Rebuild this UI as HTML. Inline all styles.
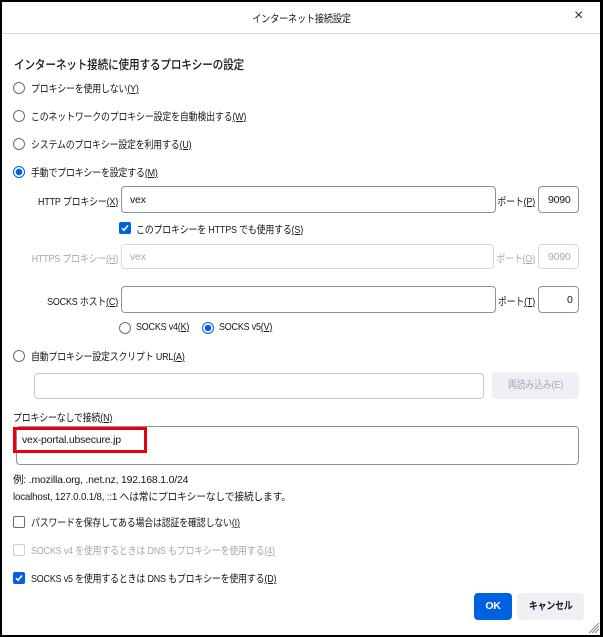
<!DOCTYPE html>
<html><head><meta charset="utf-8"><style>
*{box-sizing:border-box;margin:0;padding:0}
body{width:603px;height:637px;background:#fff;font-family:"Liberation Sans","Noto Sans CJK JP",sans-serif;font-size:10.5px;letter-spacing:-0.2px;color:#15141a;position:relative;overflow:hidden}
.frame{position:absolute;left:0;top:0;width:603px;height:637px;border:2px solid #000;border-right-width:3px}
.a{position:absolute;white-space:nowrap}
.s{transform:scaleX(0.85);transform-origin:left center}
.sr{transform:scaleX(0.85);transform-origin:right center;text-align:right}
.inp{position:absolute;border:1px solid #8f8f9d;border-radius:4px;background:#fff}
.dis{border-color:#d9d9dd;color:#aaa}
.radio{position:absolute;width:12px;height:12px;border:1px solid #6b6b73;border-radius:50%;background:#fff}
.radio.on{border-color:#0061e0;background:radial-gradient(circle,#0061e0 0,#0061e0 3px,#fff 3.5px)}
.cb{position:absolute;width:12px;height:12px;border:1px solid #6b6b73;border-radius:2px;background:#fff}
.cb.on{background:#0061e0;border-color:#0061e0}
.cb.dis{border-color:#cfcfd3}
u{text-decoration:underline}
.g{color:#a8a8ac}
</style></head><body>
<div class="frame"></div>
<div class="a" style="left:0;width:603px;text-align:center;top:11px;transform:scaleX(0.87)">インターネット接続設定</div>
<div class="a" style="left:574px;top:7px;font-size:16px;color:#333">×</div>
<div style="position:absolute;left:2px;right:3px;top:33px;height:1px;background:#d8d8d8"></div>

<div class="a s" style="left:14px;top:54px;font-size:12.5px;font-weight:500">インターネット接続に使用するプロキシーの設定</div>
<div class="radio" style="left:13px;top:82px"></div><div class="a s" style="left:31px;top:81px">プロキシーを使用しない<u>(Y)</u></div>
<div class="radio" style="left:13px;top:110px"></div><div class="a s" style="left:31px;top:109px">このネットワークのプロキシー設定を自動検出する<u>(W)</u></div>
<div class="radio" style="left:13px;top:138px"></div><div class="a s" style="left:31px;top:137px">システムのプロキシー設定を利用する<u>(U)</u></div>
<div class="radio on" style="left:13px;top:166px"></div><div class="a s" style="left:31px;top:165px">手動でプロキシーを設定する<u>(M)</u></div>

<div class="a sr" style="left:0;width:118px;top:194px">HTTP プロキシー<u>(X)</u></div>
<div class="inp" style="left:121px;top:186px;width:375px;height:27px"></div><div class="a" style="left:130px;top:194px">vex</div>
<div class="a sr" style="left:455px;width:80px;top:194px">ポート<u>(P)</u></div>
<div class="inp" style="left:538px;top:186px;width:41px;height:27px"></div><div class="a" style="left:548px;top:194px">9090</div>

<div class="cb on" style="left:119px;top:222px"><svg width="10" height="10" viewBox="0 0 10 10" style="position:absolute;left:0;top:0"><path d="M2 5.2l2 2L8 2.5" stroke="#fff" stroke-width="1.6" fill="none"/></svg></div>
<div class="a s" style="left:136px;top:222px">このプロキシーを HTTPS でも使用する<u>(S)</u></div>

<div class="a g sr" style="left:0;width:118px;top:251px">HTTPS プロキシー<u>(H)</u></div>
<div class="inp dis" style="left:121px;top:244px;width:373px;height:25px"></div><div class="a g" style="left:130px;top:251px">vex</div>
<div class="a g sr" style="left:455px;width:80px;top:251px">ポート<u>(O)</u></div>
<div class="inp dis" style="left:538px;top:244px;width:41px;height:25px"></div><div class="a g" style="left:548px;top:251px">9090</div>

<div class="a sr" style="left:0;width:118px;top:294px">SOCKS ホスト<u>(C)</u></div>
<div class="inp" style="left:121px;top:286px;width:375px;height:27px"></div>
<div class="a sr" style="left:455px;width:80px;top:294px">ポート<u>(T)</u></div>
<div class="inp" style="left:538px;top:286px;width:41px;height:27px"></div><div class="a" style="left:567px;top:294px">0</div>

<div class="radio" style="left:119px;top:322px"></div><div class="a s" style="left:136px;top:321px">SOCKS v4<u>(K)</u></div>
<div class="radio on" style="left:202px;top:322px"></div><div class="a s" style="left:219px;top:321px">SOCKS v5<u>(V)</u></div>

<div class="radio" style="left:13px;top:350px"></div><div class="a s" style="left:31px;top:349px">自動プロキシー設定スクリプト URL<u>(A)</u></div>
<div class="inp" style="left:34px;top:373px;width:450px;height:26px;border-color:#c8c8cc"></div>
<div class="a" style="left:492px;top:372px;width:87px;height:27px;background:#f0f0f4;border-radius:4px;color:#a8a8ac;text-align:center;line-height:27px"><span style="display:inline-block;transform:scaleX(0.85)">再読み込み(E)</span></div>

<div class="a s" style="left:13px;top:410px">プロキシーなしで接続<u>(N)</u></div>
<div class="inp" style="left:16px;top:426px;width:563px;height:39px"></div>
<div style="position:absolute;left:13px;top:427px;width:134px;height:26px;border:3px solid #e8000b"></div>
<div class="a" style="left:22px;top:434px">vex-portal.ubsecure.jp</div>

<div class="a" style="left:13px;top:472px">例: .mozilla.org, .net.nz, 192.168.1.0/24</div>
<div class="a" style="left:13px;top:489px;transform:scaleX(0.93);transform-origin:left">localhost, 127.0.0.1/8, ::1 へは常にプロキシーなしで接続します。</div>

<div class="cb" style="left:13px;top:516px"></div><div class="a s" style="left:31px;top:515px">パスワードを保存してある場合は認証を確認しない<u>(I)</u></div>
<div class="cb dis" style="left:13px;top:544px"></div><div class="a g s" style="left:31px;top:543px">SOCKS v4 を使用するときは DNS もプロキシーを使用する<u>(4)</u></div>
<div class="cb on" style="left:13px;top:572px"><svg width="10" height="10" viewBox="0 0 10 10" style="position:absolute;left:0;top:0"><path d="M2 5.2l2 2L8 2.5" stroke="#fff" stroke-width="1.6" fill="none"/></svg></div>
<div class="a s" style="left:31px;top:571px">SOCKS v5 を使用するときは DNS もプロキシーを使用する<u>(D)</u></div>

<div class="a" style="left:474px;top:593px;width:38px;height:27px;background:#0061e0;border-radius:4px;color:#fff;font-weight:bold;text-align:center;line-height:27px">OK</div>
<div class="a" style="left:517px;top:593px;width:67px;height:27px;background:#f0f0f4;border-radius:4px;text-align:center;line-height:27px;font-weight:bold"><span style="display:inline-block;transform:scaleX(0.85)">キャンセル</span></div>
<svg class="a" style="left:586px;top:620px" width="14" height="14"><path d="M3 13L13 3M6 13L13 6M9 13L13 9" stroke="#888" stroke-width="1"/></svg>
</body></html>
